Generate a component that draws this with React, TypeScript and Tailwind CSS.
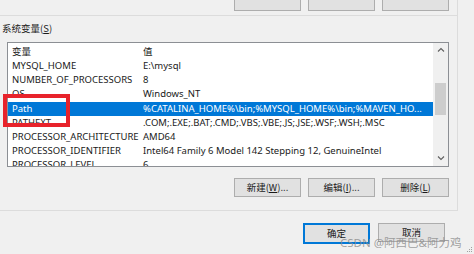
const rows: [string, string][] = [
  ["MYSQL_HOME", "E:\\mysql"],
  ["NUMBER_OF_PROCESSORS", "8"],
  ["OS", "Windows_NT"],
  ["Path", "%CATALINA_HOME%\\bin;%MYSQL_HOME%\\bin;%MAVEN_HO..."],
  ["PATHEXT", ".COM;.EXE;.BAT;.CMD;.VBS;.VBE;.JS;.JSE;.WSF;.WSH;.MSC"],
  ["PROCESSOR_ARCHITECTURE", "AMD64"],
  ["PROCESSOR_IDENTIFIER", "Intel64 Family 6 Model 142 Stepping 12, GenuineIntel"],
  ["PROCESSOR_LEVEL", "6"],
];

function Btn({ children, focused }: { children: React.ReactNode; focused?: boolean }) {
  return (
    <div
      className={`w-[67px] flex items-center justify-center bg-[#e1e1e1] ${
        focused ? "h-[21px] border-2 border-[#0078d7]" : "h-[19px] border border-[#adadad]"
      }`}
    >
      {children}
    </div>
  );
}

export default function App() {
  return (
    <div className="relative w-[474px] h-[254px] overflow-hidden bg-[#f0f0f0] text-[#1a1a1a] text-[9.5px] font-['Noto_Sans','Noto_Sans_CJK_SC',sans-serif]">
      <div className="w-[458px] border-r border-[#dcdcdc]">
        {/* previous group, mostly scrolled off */}
        <div className="h-[16px] border-b border-[#dcdcdc] flex justify-end items-start gap-[7px] pr-[8px]">
          <div className="w-[67px] h-[11px] bg-[#e1e1e1] border border-t-0 border-[#adadad]" />
          <div className="w-[67px] h-[11px] bg-[#e1e1e1] border border-t-0 border-[#adadad]" />
          <div className="w-[67px] h-[11px] bg-[#e1e1e1] border border-t-0 border-[#adadad]" />
        </div>

        {/* 系统变量 */}
        <div className="border-b border-[#dcdcdc] pt-[5px] pb-[13px]">
          <div className="ml-[2px] h-[14px] leading-[14px] font-['Noto_Sans_CJK_SC',sans-serif] text-[9.5px]">
            系统变量(<span className="underline">S</span>)
          </div>
          <div className="ml-[7px] mt-[7px] w-[442px] h-[125px] border border-[#8c8f94] bg-white flex overflow-hidden">
            <div className="w-[425px] flex flex-col">
              <div className="h-[16px] shrink-0 flex items-center font-['Noto_Sans_CJK_SC',sans-serif]">
                <div className="w-[135px] shrink-0 pl-[4px]">变量</div>
                <div>值</div>
              </div>
              {rows.map(([k, v]) => (
                <div
                  key={k}
                  className={`h-[14.2px] shrink-0 flex items-center whitespace-nowrap ${
                    k === "Path" ? "bg-[#0078d7] text-white" : ""
                  }`}
                >
                  <div className="w-[135px] shrink-0 pl-[4px]">{k}</div>
                  <div>{v}</div>
                </div>
              ))}
            </div>
            <div className="w-[15px] bg-[#f0f0f0] flex flex-col">
              <div className="h-[13px] flex items-center justify-center">
                <svg width="8" height="5" viewBox="0 0 8 5">
                  <path d="M1 4.5 L4 1.5 L7 4.5" fill="none" stroke="#606060" strokeWidth="1.1" />
                </svg>
              </div>
              <div className="flex-1">
                <div className="mt-[27px] mx-[2px] h-[32px] bg-[#cdcdcd]" />
              </div>
              <div className="h-[15px] flex items-center justify-center">
                <svg width="8" height="5" viewBox="0 0 8 5">
                  <path d="M1 0.5 L4 3.5 L7 0.5" fill="none" stroke="#606060" strokeWidth="1.1" />
                </svg>
              </div>
            </div>
          </div>
          <div className="mt-[11px] flex justify-end gap-[7px] pr-[8px] font-['Noto_Sans_CJK_SC',sans-serif] text-[9.5px]">
            <Btn>
              新建(<span className="underline">W</span>)...
            </Btn>
            <Btn>
              编辑(<span className="underline">I</span>)...
            </Btn>
            <Btn>
              删除(<span className="underline">L</span>)
            </Btn>
          </div>
        </div>
      </div>

      {/* 确定 / 取消 */}
      <div className="mt-[12px] flex gap-[8px] pl-[303px] font-['Noto_Sans_CJK_SC',sans-serif] text-[9.5px]">
        <Btn focused>确定</Btn>
        <Btn>取消</Btn>
      </div>

      {/* red highlight */}
      <div className="absolute left-[3px] top-[94px] w-[67px] h-[33px] border-[4px] border-[#e8232b]" />

      {/* watermark */}
      <div className="absolute left-[340px] top-[235px] whitespace-nowrap text-[11.5px] leading-[15px] text-[#8a8a8a]/80 font-['Noto_Sans','Noto_Sans_CJK_SC',sans-serif]">
        CSDN @阿西巴&amp;阿力鸡
      </div>

      {/* size grip */}
      <svg className="absolute right-[1px] bottom-[1px]" width="8" height="8" viewBox="0 0 8 8">
        <rect x="6" y="2" width="1" height="1" fill="#a0a0a0" />
        <rect x="4" y="4" width="1" height="1" fill="#a0a0a0" />
        <rect x="6" y="4" width="1" height="1" fill="#a0a0a0" />
        <rect x="2" y="6" width="1" height="1" fill="#a0a0a0" />
        <rect x="4" y="6" width="1" height="1" fill="#a0a0a0" />
        <rect x="6" y="6" width="1" height="1" fill="#a0a0a0" />
      </svg>
    </div>
  );
}
